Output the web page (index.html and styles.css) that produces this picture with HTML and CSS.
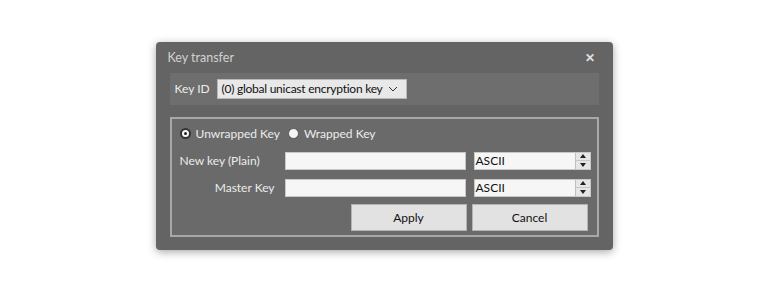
FILE: index.html
```html
<!DOCTYPE html>
<html>
<head>
<meta charset="utf-8">
<link rel="stylesheet" href="styles.css">
</head>
<body>
<div class="dialog">
  <div class="titlebar">
    <span class="title">Key transfer</span>
    <span class="close">✕</span>
  </div>
  <div class="keypanel">
    <span class="lbl">Key ID</span>
    <div class="select">
      <span>(0) global unicast encryption key</span>
      <svg class="chev" width="10" height="6" viewBox="0 0 10 6"><path d="M1 1 L5 5 L9 1" fill="none" stroke="#333" stroke-width="1"/></svg>
    </div>
  </div>
  <div class="group">
    <div class="radios">
      <label class="radio"><span class="dot on"></span>Unwrapped Key</label>
      <label class="radio"><span class="dot"></span>Wrapped Key</label>
    </div>
    <div class="grid">
      <span class="lbl l1">New key (Plain)</span>
      <div class="input"></div>
      <div class="spin"><span>ASCII</span><div class="arrows"><div class="ar up"></div><div class="ar dn"></div></div></div>
      <span class="lbl l2">Master Key</span>
      <div class="input"></div>
      <div class="spin"><span>ASCII</span><div class="arrows"><div class="ar up"></div><div class="ar dn"></div></div></div>
    </div>
    <div class="buttons">
      <div class="btn apply">Apply</div>
      <div class="btn cancel">Cancel</div>
    </div>
  </div>
</div>
</body>
</html>
```
FILE: styles.css
```css
html, body { margin: 0; padding: 0; }
body {
  width: 768px; height: 291px;
  background: #fff;
  display: flex; align-items: center; justify-content: center;
  font-family: Lato, "Liberation Sans", sans-serif;
  font-size: 12px;
}
.dialog {
  width: 457px; height: 208px;
  box-sizing: border-box;
  background: #646464;
  border-radius: 4px;
  box-shadow: 0 2px 8px rgba(0,0,0,0.35);
  padding: 0 14px 13px 14px;
  display: flex; flex-direction: column;
}
.titlebar {
  height: 33px;
  display: flex; align-items: center; justify-content: space-between;
  color: #d2d2d2;
  margin-left: -2px;
  margin-right: 4px;
}
.title { font-size: 12.5px; }
.close { font-size: 12px; color: #e0e0e0; font-weight: bold; }
.keypanel {
  height: 32px;
  background: #6e6e6e;
  display: flex; align-items: center;
  padding-left: 5px;
}
.lbl { color: #ececec; white-space: nowrap; }
.keypanel .lbl { width: 42px; }
.select {
  width: 190px; height: 20px;
  box-sizing: border-box;
  background: #e8e8e8;
  border: 1px solid #b8b8b8;
  display: flex; align-items: center; justify-content: space-between;
  padding: 0 8px 0 4px;
  color: #111;
  white-space: nowrap;
  letter-spacing: -0.25px;
}
.group {
  margin-top: 12px;
  flex: 1;
  border: 2px solid #a8a8a8;
  background: #6a6a6a;
  display: flex; flex-direction: column;
  padding: 5px 2px 4px 0;
}
.radios { display: flex; gap: 8px; height: 20px; align-items: center; padding-left: 8px; }
.radio { display: flex; align-items: center; color: #ececec; }
.dot {
  width: 11px; height: 11px; border-radius: 50%;
  background: #f6f6f6;
  border: 1px solid #555;
  box-sizing: border-box;
  margin-right: 5px;
  display: flex; align-items: center; justify-content: center;
}
.dot.on { border: 2px solid #333; }
.dot.on::after { content: ""; width: 3px; height: 3px; border-radius: 50%; background: #222; }
.grid {
  margin-top: 8px;
  display: grid;
  grid-template-columns: 113px 189px 117px;
  row-gap: 9px;
  grid-auto-rows: 18px;
}
.grid .lbl { align-self: center; }
.grid .input { width: 181px; }
.l1 { padding-left: 8px; }
.l2 { justify-self: end; padding-right: 10px; }
.input { background: #f6f6f6; border: 1px solid #c8c8c8; box-sizing: border-box; }
.spin {
  background: #f6f6f6; border: 1px solid #c8c8c8; box-sizing: border-box;
  display: flex; align-items: center; justify-content: space-between;
  padding-left: 1px;
  color: #111;
}
.arrows { width: 14px; height: 16px; display: flex; flex-direction: column; border-left: 1px solid #c0c0c0; background: #e6e6e6; }
.ar { flex: 1; display: flex; align-items: center; justify-content: center; }
.ar.up { border-bottom: 1px solid #c8c8c8; }
.ar.up::after { content: ""; border-left: 3px solid transparent; border-right: 3px solid transparent; border-bottom: 4px solid #222; }
.ar.dn::after { content: ""; border-left: 3px solid transparent; border-right: 3px solid transparent; border-top: 4px solid #222; }
.buttons { display: flex; justify-content: flex-end; gap: 5px; margin-top: 7px; padding-right: 7px; }
.btn {
  height: 27px; box-sizing: border-box;
  background: #e2e2e2; border: 1px solid #b4b4b4;
  display: flex; align-items: center; justify-content: center;
  color: #111;
}
.apply { width: 116px; }
.cancel { width: 116px; }
```
